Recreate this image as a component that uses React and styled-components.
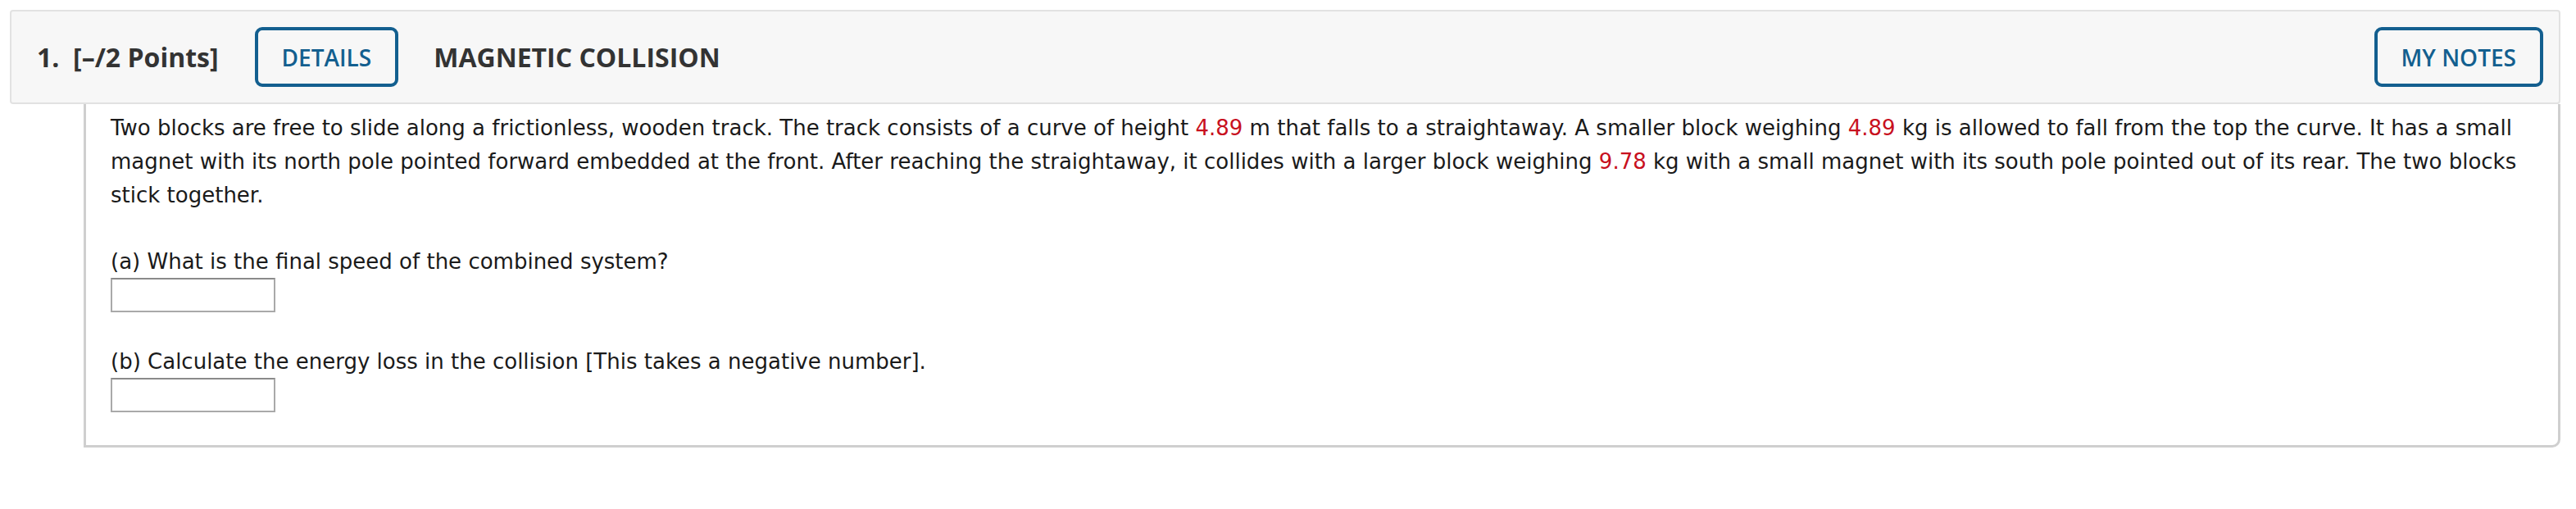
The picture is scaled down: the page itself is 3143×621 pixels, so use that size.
import React from 'react'
import styled, { createGlobalStyle } from 'styled-components'

const GlobalStyle = createGlobalStyle`
  html, body {
    margin: 0;
    padding: 0;
    background: #ffffff;
  }
  body {
    font-family: "DejaVu Sans", Verdana, sans-serif;
  }
`

const question = {
  number: 1,
  points: '[–/2 Points]',
  title: 'MAGNETIC COLLISION',
}

const App = () => {
  return (
    <>
      <GlobalStyle />
      <Page>
        <Header>
          <Points>
            {question.number}.&nbsp; {question.points}
          </Points>
          <OutlineButton>DETAILS</OutlineButton>
          <Title>{question.title}</Title>
          <Spacer />
          <OutlineButton>MY NOTES</OutlineButton>
        </Header>
        <Body>
          <Paragraph>
            Two blocks are free to slide along a frictionless, wooden track. The track consists of a curve of height{' '}
            <Value>4.89</Value> m that falls to a straightaway. A smaller block weighing <Value>4.89</Value> kg is
            allowed to fall from the top the curve. It has a small magnet with its north pole pointed forward embedded at
            the front. After reaching the straightaway, it collides with a larger block weighing <Value>9.78</Value> kg
            with a small magnet with its south pole pointed out of its rear. The two blocks stick together.
          </Paragraph>
          <Part>
            <PartLabel>(a) What is the final speed of the combined system?</PartLabel>
            <Answer type="text" />
          </Part>
          <Part>
            <PartLabel>(b) Calculate the energy loss in the collision [This takes a negative number].</PartLabel>
            <Answer type="text" />
          </Part>
        </Body>
      </Page>
    </>
  )
}

const Page = styled.div`
  width: 3112px;
  padding: 12px 0 0 12px;
`

const Header = styled.div`
  display: flex;
  align-items: center;
  box-sizing: border-box;
  height: 115px;
  padding: 0 19px 0 31px;
  background: #f7f7f7;
  border: 2px solid #e2e2e2;
  border-radius: 4px;
  font-family: "Open Sans", "Liberation Sans", sans-serif;
`

const Points = styled.span`
  font-size: 32px;
  font-weight: 700;
  color: #333333;
  margin-right: 44px;
  white-space: nowrap;
`

const OutlineButton = styled.button`
  box-sizing: border-box;
  height: 73px;
  padding: 0 29px;
  background: transparent;
  border: 4px solid #135f8f;
  border-radius: 9px;
  color: #135f8f;
  font-family: "Open Sans", "Liberation Sans", sans-serif;
  font-size: 28px;
  font-weight: 600;
  cursor: pointer;
`

const Title = styled.h2`
  margin: 0 0 0 43px;
  font-size: 32px;
  font-weight: 700;
  color: #333333;
`

const Spacer = styled.div`
  flex: 1;
`

const Body = styled.div`
  margin-left: 90px;
  padding: 9px 30px 40px 30px;
  border: 3px solid #cfcfcf;
  border-top: none;
  border-radius: 0 0 10px 0;
  color: #1a1a1a;
  font-family: "DejaVu Sans", Verdana, sans-serif;
  font-size: 26px;
  line-height: 41px;
`

const Paragraph = styled.p`
  margin: 0 0 40px 0;
`

const Value = styled.span`
  color: #c8101e;
`

const Part = styled.div`
  margin-bottom: 40px;

  &:last-child {
    margin-bottom: 0;
  }
`

const PartLabel = styled.div``

const Answer = styled.input`
  display: block;
  box-sizing: border-box;
  width: 201px;
  height: 42px;
  margin-top: -1px;
  border: 2px solid #a9a9a9;
  border-top-color: #8a8a8a;
  background: #ffffff;
`

export default App
